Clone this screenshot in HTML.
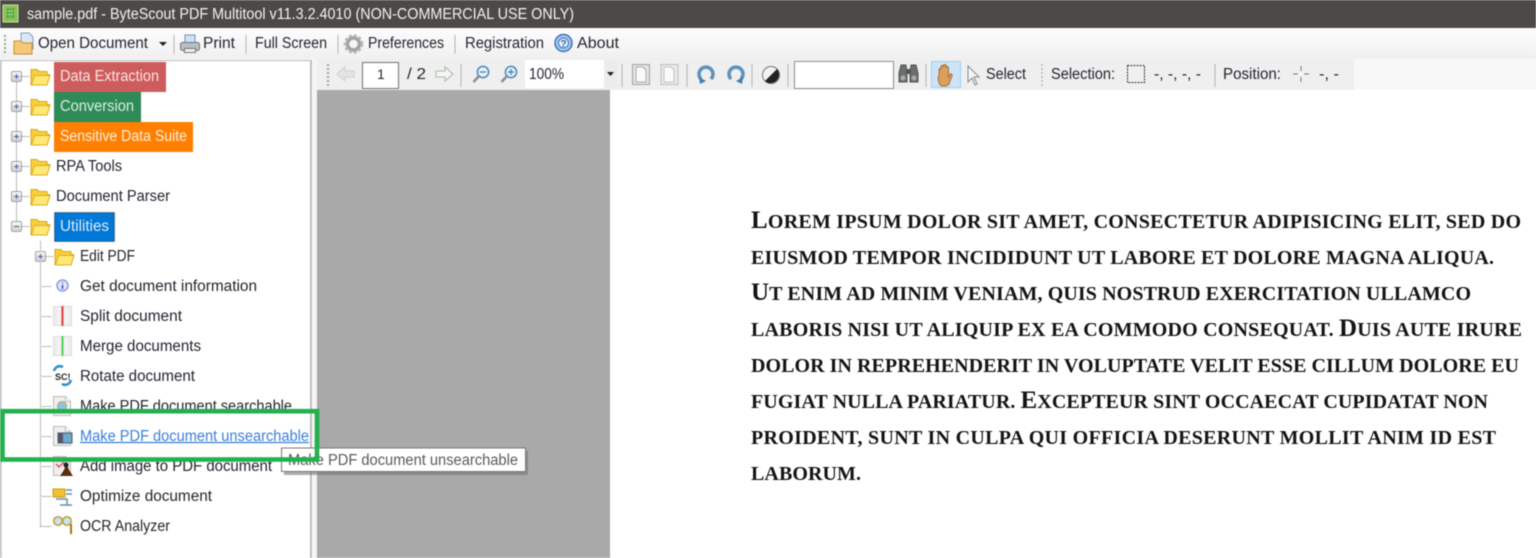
<!DOCTYPE html>
<html><head><meta charset="utf-8"><title>sample.pdf</title>
<style>
html,body{margin:0;padding:0;width:1536px;height:558px;overflow:hidden;background:#fff}
svg{display:block;filter:blur(.5px)}
text{font-family:"Liberation Sans",sans-serif;font-size:15.5px;fill:#24242f}
.p text{font-family:"Liberation Serif",serif;font-weight:bold;font-size:20px;fill:#141414;text-transform:uppercase}
tspan.b{font-size:25px}
.w{fill:#f4f0ee}
.sep{stroke:#b4b4b4;stroke-width:1}
.dot{stroke:#777;stroke-width:1;stroke-dasharray:1 1;fill:none}
</style></head><body>
<svg width="1536" height="558" viewBox="0 0 1536 558" xmlns="http://www.w3.org/2000/svg">
<defs>
<linearGradient id="tb" x1="0" y1="0" x2="0" y2="1"><stop offset="0" stop-color="#fdfdfd"/><stop offset="1" stop-color="#f0f0f0"/></linearGradient>
<linearGradient id="pb" x1="0" y1="0" x2="0" y2="1"><stop offset="0" stop-color="#fafafa"/><stop offset="1" stop-color="#cfcfcf"/></linearGradient>
<g id="folder"><path d="M1 2.500h6l2 2h8v3h2.500l-2.500 10.500H1z" fill="#f8cf3c" stroke="#d8a820"/><path d="M4.500 8.500h15.500l-3 9.500H1.500z" fill="#ffe873" stroke="#dcae24" stroke-width="1"/></g>
<g id="plus"><rect x=".5" y=".5" width="10" height="10" rx="1.500" fill="url(#pb)" stroke="#a5a5a5"/><path d="M3 5.500h5M5.500 3v5" stroke="#4c5ea8" stroke-width="1"/></g>
<g id="minus"><rect x=".5" y=".5" width="10" height="10" rx="1.500" fill="url(#pb)" stroke="#a5a5a5"/><path d="M3 5.500h5" stroke="#555" stroke-width="1"/></g>
<g id="page"><path d="M.5.5h12l5 5v14H.5z" fill="#efefef" stroke="#bbb"/><path d="M12.500.5v5h5" fill="#fff" stroke="#bbb"/></g>
<g id="split"><rect x=".5" y=".5" width="18" height="19" fill="#eee" stroke="#dcdcdc"/><path d="M5.500 1v18M13.500 1v18" stroke="#fafafa"/></g>
<g id="glass"><circle cx="11" cy="7" r="5.600" fill="#e8f2fb" stroke="#4f86b8" stroke-width="1.500"/><path d="M6.500 11.500L1.500 17" stroke="#8a8f96" stroke-width="2.600"/></g>
<g id="rot"><path d="M4 14a7 7 0 1 1 10 0" fill="none" stroke="#5d92bd" stroke-width="3.500"/><path d="M2 12l1 7 6-3z" fill="#3f7fb3"/></g>
<g id="pdoc"><rect x=".5" y=".5" width="17" height="20" fill="#e4e4e4" stroke="#9aa39e"/><path d="M4 3h7l3 3v12H4z" fill="#fafafa" stroke="#a9a9a9"/></g>
</defs>

<!-- title bar -->
<rect width="1536" height="28" fill="#4c4a47"/>
<rect x="3" y="5" width="15" height="17" fill="#8cc152" stroke="#c9dfa6"/>
<rect x="7" y="8" width="7" height="10" fill="#3f9a3a"/>
<path d="M9.300 8v10M11.700 8v10M7 11h7M7 14.500h7" stroke="#b7dc8a" stroke-width=".8"/>
<text x="27" y="19" class="w" textLength="547" lengthAdjust="spacingAndGlyphs">sample.pdf - ByteScout PDF Multitool v11.3.2.4010 (NON-COMMERCIAL USE ONLY)</text>

<!-- toolbar 1 -->
<rect y="28" width="1536" height="31" fill="url(#tb)"/>
<path d="M5 35v20" stroke="#a0a0a0" stroke-width="2" stroke-dasharray="2 2"/>
<path d="M21 33h8l4 4v12H21z" fill="#dce8f6" stroke="#7f9fc9"/>
<path d="M14 41h7l2 2h9v11H14z" fill="#f5c878" stroke="#c98e32"/>
<text x="38" y="48" textLength="110" lengthAdjust="spacingAndGlyphs">Open Document</text>
<path d="M159 42h8l-4 4z" fill="#222"/>
<line class="sep" x1="174" y1="35" x2="174" y2="54"/>
<path d="M185 35h10v8h-10z" fill="#cfe0f2" stroke="#6e93bd"/>
<rect x="180.500" y="42.500" width="19" height="8" rx="2" fill="#b9bec4" stroke="#6f757c"/>
<rect x="184.500" y="48.500" width="11" height="4" fill="#eee" stroke="#777"/>
<text x="203" y="48" textLength="32" lengthAdjust="spacingAndGlyphs">Print</text>
<line class="sep" x1="246" y1="35" x2="246" y2="54"/>
<text x="255" y="48" textLength="72" lengthAdjust="spacingAndGlyphs">Full Screen</text>
<line class="sep" x1="338" y1="35" x2="338" y2="54"/>
<circle cx="353.500" cy="44" r="6" fill="none" stroke="#a3a3a3" stroke-width="3.500"/>
<circle cx="353.500" cy="44" r="8.500" fill="none" stroke="#b5b5b5" stroke-width="2.500" stroke-dasharray="3 2"/>
<text x="368" y="48" textLength="76" lengthAdjust="spacingAndGlyphs">Preferences</text>
<line class="sep" x1="455" y1="35" x2="455" y2="54"/>
<text x="465" y="48" textLength="79" lengthAdjust="spacingAndGlyphs">Registration</text>
<circle cx="563.500" cy="43" r="8.500" fill="#a9c8ec" stroke="#3f74bb" stroke-width="1.500"/>
<circle cx="563.500" cy="43" r="5" fill="#e6f0fa" stroke="#3f74bb"/>
<text x="560.500" y="47" style="font-size:10px;font-weight:bold;fill:#2d62ad">?</text>
<text x="577" y="48" textLength="42" lengthAdjust="spacingAndGlyphs">About</text>

<!-- toolbar 2 background -->
<rect x="317" y="59" width="1037" height="31" fill="#efefef"/>
<rect x="1354" y="59" width="182" height="31" fill="#f8f8f8"/>
<rect x="313" y="59" width="4" height="499" fill="#f4f4f4"/>

<!-- tree pane -->
<rect x="0" y="60" width="312" height="498" fill="#fff"/>
<path d="M0.800 60V558" stroke="#b8b8be" stroke-width="1.500"/>
<path d="M0 60.500H312" stroke="#b8b8be"/>
<path d="M311 60V558" stroke="#bcbcc0" stroke-width="2"/>

<rect x="54" y="62" width="112" height="30" fill="#cd5c5c"/>
<rect x="54" y="92" width="87" height="30" fill="#2e8b57"/>
<rect x="54" y="122" width="139" height="30" fill="#ff8000"/>
<rect x="54.500" y="212.500" width="60" height="29" fill="#0078d7" stroke="#333" stroke-dasharray="1 1"/>

<path class="dot" d="M16.500 82V226M40.500 241V526M22 76.500h8M22 106.500h8M22 136.500h8M22 166.500h8M22 196.500h8M22 226.500h8M46 256.500h8M42 286.500h10M42 316.500h10M42 346.500h10M42 376.500h10M42 406.500h10M42 436.500h10M42 466.500h10M42 496.500h10M40 526.500h12"/>

<use href="#plus" x="11" y="71"/><use href="#plus" x="11" y="101"/><use href="#plus" x="11" y="131"/><use href="#plus" x="11" y="161"/><use href="#plus" x="11" y="191"/><use href="#minus" x="11" y="221"/><use href="#plus" x="35" y="251"/>
<use href="#folder" x="30" y="67"/><use href="#folder" x="30" y="97"/><use href="#folder" x="30" y="127"/><use href="#folder" x="30" y="157"/><use href="#folder" x="30" y="187"/><use href="#folder" x="30" y="217"/><use href="#folder" x="54" y="247"/>

<text x="60" y="81" textLength="99" lengthAdjust="spacingAndGlyphs" style="fill:#fbe3e3">Data Extraction</text>
<text x="60" y="111" textLength="74" lengthAdjust="spacingAndGlyphs" style="fill:#d8eee0">Conversion</text>
<text x="60" y="141" textLength="127" lengthAdjust="spacingAndGlyphs" style="fill:#ffeedd">Sensitive Data Suite</text>
<text x="56" y="171" textLength="66" lengthAdjust="spacingAndGlyphs">RPA Tools</text>
<text x="56" y="201" textLength="114" lengthAdjust="spacingAndGlyphs">Document Parser</text>
<text x="60" y="231" textLength="49" lengthAdjust="spacingAndGlyphs" style="fill:#dcecfa">Utilities</text>
<text x="80" y="261" textLength="55" lengthAdjust="spacingAndGlyphs">Edit PDF</text>
<text x="80" y="291" textLength="177" lengthAdjust="spacingAndGlyphs">Get document information</text>
<text x="80" y="321" textLength="102" lengthAdjust="spacingAndGlyphs">Split document</text>
<text x="80" y="351" textLength="121" lengthAdjust="spacingAndGlyphs">Merge documents</text>
<text x="80" y="381" textLength="115" lengthAdjust="spacingAndGlyphs">Rotate document</text>
<text x="80" y="411" textLength="212" lengthAdjust="spacingAndGlyphs">Make PDF document searchable</text>
<text x="80" y="441" textLength="229" lengthAdjust="spacingAndGlyphs" style="fill:#3a7fdc">Make PDF document unsearchable</text>
<path d="M80 442.500H309" stroke="#3a7fdc" stroke-width="1.200"/>
<text x="80" y="471" textLength="192" lengthAdjust="spacingAndGlyphs">Add image to PDF document</text>
<text x="80" y="501" textLength="132" lengthAdjust="spacingAndGlyphs">Optimize document</text>
<text x="80" y="531" textLength="90" lengthAdjust="spacingAndGlyphs">OCR Analyzer</text>

<!-- tree leaf icons -->
<circle cx="62.500" cy="285.500" r="5.500" fill="#e4e8fb" stroke="#8c96e0" stroke-width="1.500"/>
<path d="M62.500 282.500v1M62.500 285v4" stroke="#3344bb" stroke-width="1.500"/>
<use href="#split" x="53" y="306"/><path d="M62.500 306v20" stroke="#e0403c" stroke-width="2"/>
<use href="#split" x="53" y="336"/><path d="M62.500 336v20" stroke="#52d452" stroke-width="2"/>
<path d="M54 371c1-4 5-6 9-4" fill="none" stroke="#2f8fc6" stroke-width="2.500"/><path d="M71 380c-1 4-5 6-9 4" fill="none" stroke="#2f8fc6" stroke-width="2.500"/>
<text x="55" y="380" style="font-size:9px;font-weight:bold;fill:#222">SC!</text>
<use href="#page" x="53" y="396"/><circle cx="62" cy="406" r="4.500" fill="#8cc4e8" stroke="#c2a45c"/>
<use href="#page" x="53" y="426"/><rect x="58" y="433" width="14" height="10" fill="#6fa8c9" stroke="#3f5f75"/><rect x="58" y="433" width="5" height="10" fill="#556"/>
<use href="#page" x="53" y="456"/><path d="M56 464l3 3 5-5" fill="none" stroke="#e0505a" stroke-width="1.500"/><path d="M60 476l4-6 1-3h3l1 3 4 6z" fill="#5a2c10"/><circle cx="66" cy="465" r="2.500" fill="#222"/>
<rect x="53" y="489" width="12" height="8" fill="#f3c02e" stroke="#c99c20"/>
<path d="M56 499h11v6M66 490h6M66 494h6M60 505h12" stroke="#6d8cab" stroke-width="1.500" fill="none"/>
<circle cx="58" cy="521" r="4.300" fill="#bfe6f2" stroke="#c99c36" stroke-width="1.500"/><circle cx="67" cy="521" r="4.300" fill="#bfe6f2" stroke="#c99c36" stroke-width="1.500"/>
<path d="M71 524v10" stroke="#a9701d" stroke-width="2"/>

<!-- viewer -->
<rect x="317" y="90" width="293" height="468" fill="#a9a9a9"/>
<rect x="610" y="90" width="926" height="468" fill="#fff"/>

<!-- toolbar 2 -->
<path d="M328 64v22" stroke="#a0a0a0" stroke-width="2" stroke-dasharray="2 2"/>
<path d="M337 74l8-7v4h9v6h-9v4z" fill="#e4e4e4" stroke="#d0d0d0"/>
<rect x="362.500" y="62.500" width="36" height="26" fill="#fff" stroke="#707070"/>
<text x="377" y="79" style="font-size:14px">1</text>
<text x="407" y="79" textLength="19" lengthAdjust="spacingAndGlyphs">/ 2</text>
<path d="M453 74l-8-7v4h-9v6h9v4z" fill="#f2f7f2" stroke="#a6b9a6"/>
<line class="sep" x1="461" y1="64" x2="461" y2="87"/>
<use href="#glass" x="472" y="65"/><path d="M480 72h6" stroke="#4f86b8" stroke-width="1.400"/>
<use href="#glass" x="500" y="65"/><path d="M508 72h6M511 69v6" stroke="#4f86b8" stroke-width="1.400"/>
<rect x="525" y="60" width="79" height="28" fill="#fff"/>
<rect x="604" y="60" width="13" height="28" fill="#ececec"/>
<text x="529" y="79" textLength="35" lengthAdjust="spacingAndGlyphs">100%</text>
<path d="M607 72h7l-3.500 4z" fill="#222"/>
<line class="sep" x1="622" y1="64" x2="622" y2="87"/>
<use href="#pdoc" x="632" y="64"/>
<path d="M661 64.500h17v20h-17z" fill="#e8ece8" stroke="#b8c0b8"/><path d="M664 67h7l3 3v12h-10z" fill="#fafafa" stroke="#c4c4c4"/>
<line class="sep" x1="687" y1="64" x2="687" y2="87"/>
<use href="#rot" x="697" y="65"/>
<use href="#rot" transform="translate(745 65) scale(-1 1)"/>
<line class="sep" x1="752" y1="64" x2="752" y2="87"/>
<circle cx="771" cy="75" r="8.500" fill="#f2f2f2" stroke="#777"/>
<path d="M777 69a8.500 8.500 0 0 1-12 12z" fill="#222"/>
<line class="sep" x1="788" y1="64" x2="788" y2="87"/>
<rect x="794.500" y="61.500" width="99" height="27" fill="#fff" stroke="#8c8c8c"/>
<path d="M899 73l2-8h5l1 8v9h-8zM910 73l1-8h5l2 8v9h-8z" fill="#6c6f70" stroke="#4f5254"/>
<path d="M906 69h5v5h-5z" fill="#555"/>
<circle cx="903" cy="78" r="2.500" fill="#a8aaac"/><circle cx="914" cy="78" r="2.500" fill="#a8aaac"/>
<line class="sep" x1="926" y1="64" x2="926" y2="87"/>
<rect x="931.500" y="61.500" width="29" height="26" fill="#cce4f7" stroke="#a0d0f5"/>
<path d="M939 76v-6c0-2 2-2 2 0v-3c0-2 2.500-2 2.500 0v-1c0-2 2.500-2 2.500 0v2c0-2 2.500-2 2.500 0v10l1-3c1-2 3-1 2.500 1l-3 8c-1 1-2 2-4 2h-3c-2 0-4-4-4-9z" fill="#dc9e5c" stroke="#a87136"/>
<path d="M968 66v16l4-4 3 7 2-1-3-7h5z" fill="#f4f4f4" stroke="#8a8a8a"/>
<text x="986" y="79" textLength="40" lengthAdjust="spacingAndGlyphs">Select</text>
<path d="M1042 64v22" stroke="#b5b5b5" stroke-width="1.500" stroke-dasharray="2 2"/>
<text x="1051" y="79" textLength="64" lengthAdjust="spacingAndGlyphs">Selection:</text>
<rect x="1127.500" y="65.500" width="17" height="17" fill="none" stroke="#333" stroke-dasharray="2 1"/>
<text x="1154" y="79" textLength="47" lengthAdjust="spacingAndGlyphs">-, -, -, -</text>
<line class="sep" x1="1215" y1="64" x2="1215" y2="87"/>
<text x="1223" y="79" textLength="58" lengthAdjust="spacingAndGlyphs">Position:</text>
<path d="M1293 74h16M1301 66v16" stroke="#777"/><path d="M1298 74h6M1301 71v6" stroke="#fafafa"/>
<text x="1319" y="79" textLength="20" lengthAdjust="spacingAndGlyphs">-, -</text>

<!-- pdf text -->
<g class="p">
<text x="751" y="228" textLength="770" lengthAdjust="spacing"><tspan class="b">L</tspan>orem ipsum dolor sit amet, consectetur adipisicing elit, sed do</text>
<text x="751" y="264" textLength="743" lengthAdjust="spacing">eiusmod tempor incididunt ut labore et dolore magna aliqua.</text>
<text x="751" y="300" textLength="720" lengthAdjust="spacing"><tspan class="b">U</tspan>t enim ad minim veniam, quis nostrud exercitation ullamco</text>
<text x="751" y="336" textLength="771" lengthAdjust="spacing">laboris nisi ut aliquip ex ea commodo consequat. <tspan class="b">D</tspan>uis aute irure</text>
<text x="751" y="372" textLength="768" lengthAdjust="spacing">dolor in reprehenderit in voluptate velit esse cillum dolore eu</text>
<text x="751" y="408" textLength="737" lengthAdjust="spacing">fugiat nulla pariatur. <tspan class="b">E</tspan>xcepteur sint occaecat cupidatat non</text>
<text x="751" y="444" textLength="745" lengthAdjust="spacing">proident, sunt in culpa qui officia deserunt mollit anim id est</text>
<text x="751" y="480" textLength="110" lengthAdjust="spacing">laborum.</text>
</g>

<!-- tooltip -->
<rect x="284" y="451" width="244" height="24" fill="#777" opacity=".6"/>
<rect x="281.500" y="448" width="244" height="23.500" fill="#fff" stroke="#777"/>
<text x="288" y="465" textLength="230" lengthAdjust="spacingAndGlyphs" style="fill:#5a5a5a">Make PDF document unsearchable</text>

<!-- green highlight -->
<rect x="2.500" y="411.200" width="314.500" height="48.300" fill="none" stroke="#22b14c" stroke-width="4.600"/>
</svg>
</body></html>
